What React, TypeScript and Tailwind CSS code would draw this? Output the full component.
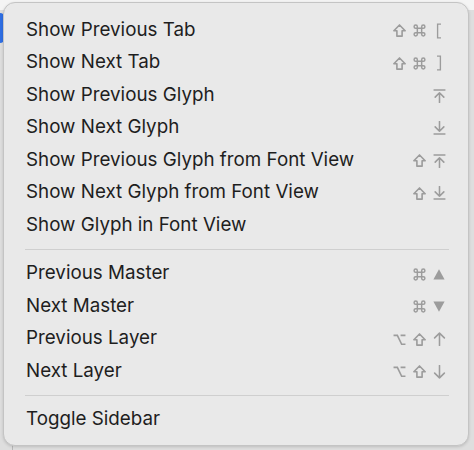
import React from "react";

const C = "#9c9c9c";

const Shift = () => (
  <svg width="13" height="13" viewBox="0 0 12 12" fill="none" stroke={C} strokeWidth="1.5" strokeLinejoin="round">
    <path d="M6 0.9L11.2 6.2H8.4V11.2H3.6V6.2H0.8Z" />
  </svg>
);
const Cmd = () => (
  <svg width="13" height="13" viewBox="0 0 12 12" fill="none" stroke={C} strokeWidth="1.35">
    <path d="M4 4H8V8H4Z M4 4V2.5A1.5 1.5 0 1 0 2.5 4H4 M8 4V2.5A1.5 1.5 0 1 1 9.5 4H8 M4 8V9.5A1.5 1.5 0 1 1 2.5 8H4 M8 8V9.5A1.5 1.5 0 1 0 9.5 8H8" />
  </svg>
);
const Opt = () => (
  <svg width="13" height="13" viewBox="0 0 12 12" fill="none" stroke={C} strokeWidth="1.5">
    <path d="M0.5 2.2H4L8 10.4H11.5 M7 2.2H11.5" />
  </svg>
);
const Up = () => (
  <svg width="13" height="14" viewBox="0 0 12 13" fill="none" stroke={C} strokeWidth="1.45" strokeLinecap="round" strokeLinejoin="round">
    <path d="M6 1V12.5 M1.5 5.5L6 1L10.5 5.5" />
  </svg>
);
const Down = () => (
  <svg width="13" height="14" viewBox="0 0 12 13" fill="none" stroke={C} strokeWidth="1.45" strokeLinecap="round" strokeLinejoin="round">
    <path d="M6 0.5V12 M1.5 7.5L6 12L10.5 7.5" />
  </svg>
);
const UpBar = () => (
  <svg width="13" height="14" viewBox="0 0 12 13" fill="none" stroke={C} strokeWidth="1.45" strokeLinecap="round" strokeLinejoin="round">
    <path d="M1 1H11 M6 3.5V12.5 M2 7.5L6 3.5L10 7.5" />
  </svg>
);
const DownBar = () => (
  <svg width="13" height="14" viewBox="0 0 12 13" fill="none" stroke={C} strokeWidth="1.45" strokeLinecap="round" strokeLinejoin="round">
    <path d="M1 12H11 M6 0.5V9.5 M2 5.5L6 9.5L10 5.5" />
  </svg>
);
const TriUp = () => (
  <svg width="12" height="11" viewBox="0 0 12 11" fill={C}>
    <path d="M6 0.3L11.6 10.5H0.4Z" />
  </svg>
);
const TriDown = () => (
  <svg width="12" height="11" viewBox="0 0 12 11" fill={C}>
    <path d="M6 10.7L11.6 0.5H0.4Z" />
  </svg>
);
const BrL = () => (
  <svg width="6" height="16" viewBox="0 0 6 15" fill="none" stroke={C} strokeWidth="1.35">
    <path d="M5 0.6H1.6V14.4H5" />
  </svg>
);
const BrR = () => (
  <svg width="6" height="16" viewBox="0 0 6 15" fill="none" stroke={C} strokeWidth="1.35">
    <path d="M1 0.6H4.4V14.4H1" />
  </svg>
);

type Item = { label: string; mods: React.ReactNode[]; key?: React.ReactNode };

const Slot = ({ children }: { children?: React.ReactNode }) => (
  <div className="w-[20px] flex items-center justify-center">{children}</div>
);

const Row = ({ item }: { item: Item }) => (
  <div className="h-[32.5px] flex items-center pl-[22px] pr-[19px]">
    <span className="flex-1 text-[18.8px] leading-none text-[#1e1e1e]">{item.label}</span>
    <div className="flex items-center mt-px">
      {item.mods.map((m, i) => (
        <Slot key={i}>{m}</Slot>
      ))}
      <Slot>{item.key}</Slot>
    </div>
  </div>
);

const Sep = () => (
  <div className="h-[16px] flex items-center pl-[21px] pr-[19px]">
    <div className="h-px w-full bg-[#cfcfcf]" />
  </div>
);

const g1: Item[] = [
  { label: "Show Previous Tab", mods: [<Shift />, <Cmd />], key: <BrL /> },
  { label: "Show Next Tab", mods: [<Shift />, <Cmd />], key: <BrR /> },
  { label: "Show Previous Glyph", mods: [], key: <UpBar /> },
  { label: "Show Next Glyph", mods: [], key: <DownBar /> },
  { label: "Show Previous Glyph from Font View", mods: [<Shift />], key: <UpBar /> },
  { label: "Show Next Glyph from Font View", mods: [<Shift />], key: <DownBar /> },
  { label: "Show Glyph in Font View", mods: [] },
];
const g2: Item[] = [
  { label: "Previous Master", mods: [<Cmd />], key: <TriUp /> },
  { label: "Next Master", mods: [<Cmd />], key: <TriDown /> },
  { label: "Previous Layer", mods: [<Opt />, <Shift />], key: <Up /> },
  { label: "Next Layer", mods: [<Opt />, <Shift />], key: <Down /> },
];

export default function App() {
  return (
    <div
      className="relative w-[474px] h-[450px] overflow-hidden bg-[#dedede]"
      style={{ fontFamily: "Inter, 'Noto Sans', sans-serif" }}
    >
      <div className="absolute left-0 top-0 w-full h-[10px] bg-[#f4f4f4]" />
      <div className="absolute left-[12px] top-[440px] w-px h-[10px] bg-[#b8b8b8]" />
      <div className="absolute left-[-6px] top-[13px] w-[10px] h-[30px] rounded-[4px] bg-[#2f6fe4]" />
      <div className="relative ml-[3px] mt-[2px] w-[466px] h-[444px] rounded-[12px] border border-[#c4c4c4] bg-[#e9e9e9] shadow-[0_1px_3px_rgba(0,0,0,0.15)] pt-[11px]">
        {g1.map((it) => (
          <Row key={it.label} item={it} />
        ))}
        <Sep />
        {g2.map((it) => (
          <Row key={it.label} item={it} />
        ))}
        <Sep />
        <Row item={{ label: "Toggle Sidebar", mods: [] }} />
      </div>
    </div>
  );
}
